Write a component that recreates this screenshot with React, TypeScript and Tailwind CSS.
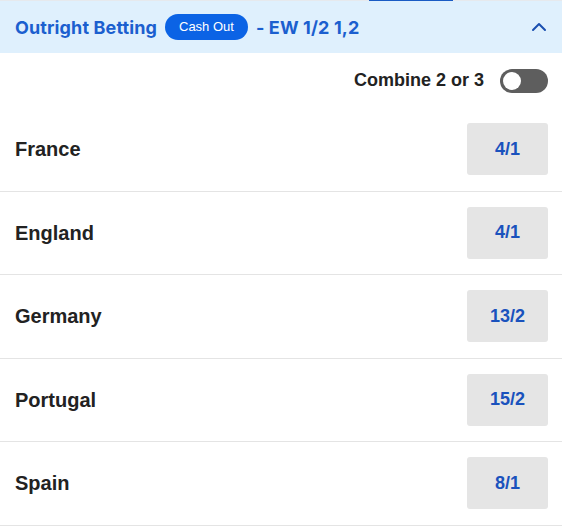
const selections = [
  { name: 'France', odds: '4/1' },
  { name: 'England', odds: '4/1' },
  { name: 'Germany', odds: '13/2' },
  { name: 'Portugal', odds: '15/2' },
  { name: 'Spain', odds: '8/1' },
];

const App = () => {
  return (
    <div className="w-[562px] min-h-[528px] bg-white font-['Liberation_Sans',Arial,sans-serif]">
      {/* tab strip edge */}
      <div className="h-px bg-[#e6e9ed] flex">
        <div className="ml-[369px] w-[84px] h-px bg-[#1a5bc4]" />
      </div>

      {/* header */}
      <div className="h-[52px] bg-[#dff0fd] flex items-center pl-[15px] pr-[15px]">
        <span className="font-['Inter',sans-serif] text-[18px] font-bold tracking-[0.12px] text-[#1b5fcf]">Outright Betting</span>
        <span className="ml-[8px] h-[26px] px-[14px] rounded-full bg-[#0b63e5] text-white text-[13px] flex items-center">
          Cash Out
        </span>
        <span className="ml-[8px] font-['Inter',sans-serif] text-[18px] font-bold tracking-[0.12px] text-[#1b5fcf]">- EW 1/2 1,2</span>
        <svg className="ml-auto" width="16" height="10" viewBox="0 0 16 10" aria-hidden="true">
          <path d="M2 8 L8 2 L14 8" fill="none" stroke="#1a4fb0" strokeWidth="2" strokeLinecap="round" strokeLinejoin="round" />
        </svg>
      </div>

      {/* combine toggle */}
      <div className="h-[55px] flex items-center justify-end pr-[14px]">
        <span className="text-[18px] font-bold text-[#222]">Combine 2 or 3</span>
        <button className="ml-[16px] w-[48px] h-[24px] rounded-full bg-[#5e5e5e] flex items-center px-[3px]">
          <span className="w-[18px] h-[18px] rounded-full bg-white" />
        </button>
      </div>

      {/* selections */}
      {selections.map((s) => (
        <div key={s.name} className="h-[83.5px] flex items-center justify-between pl-[15px] pr-[14px] border-b border-[#e4e4e4]">
          <span className="text-[20px] font-bold text-[#222]">{s.name}</span>
          <button className="w-[81px] h-[52px] rounded-[3px] bg-[#e5e5e5] text-[18px] font-bold text-[#1a52bd]">
            {s.odds}
          </button>
        </div>
      ))}
    </div>
  );
};

export default App;
